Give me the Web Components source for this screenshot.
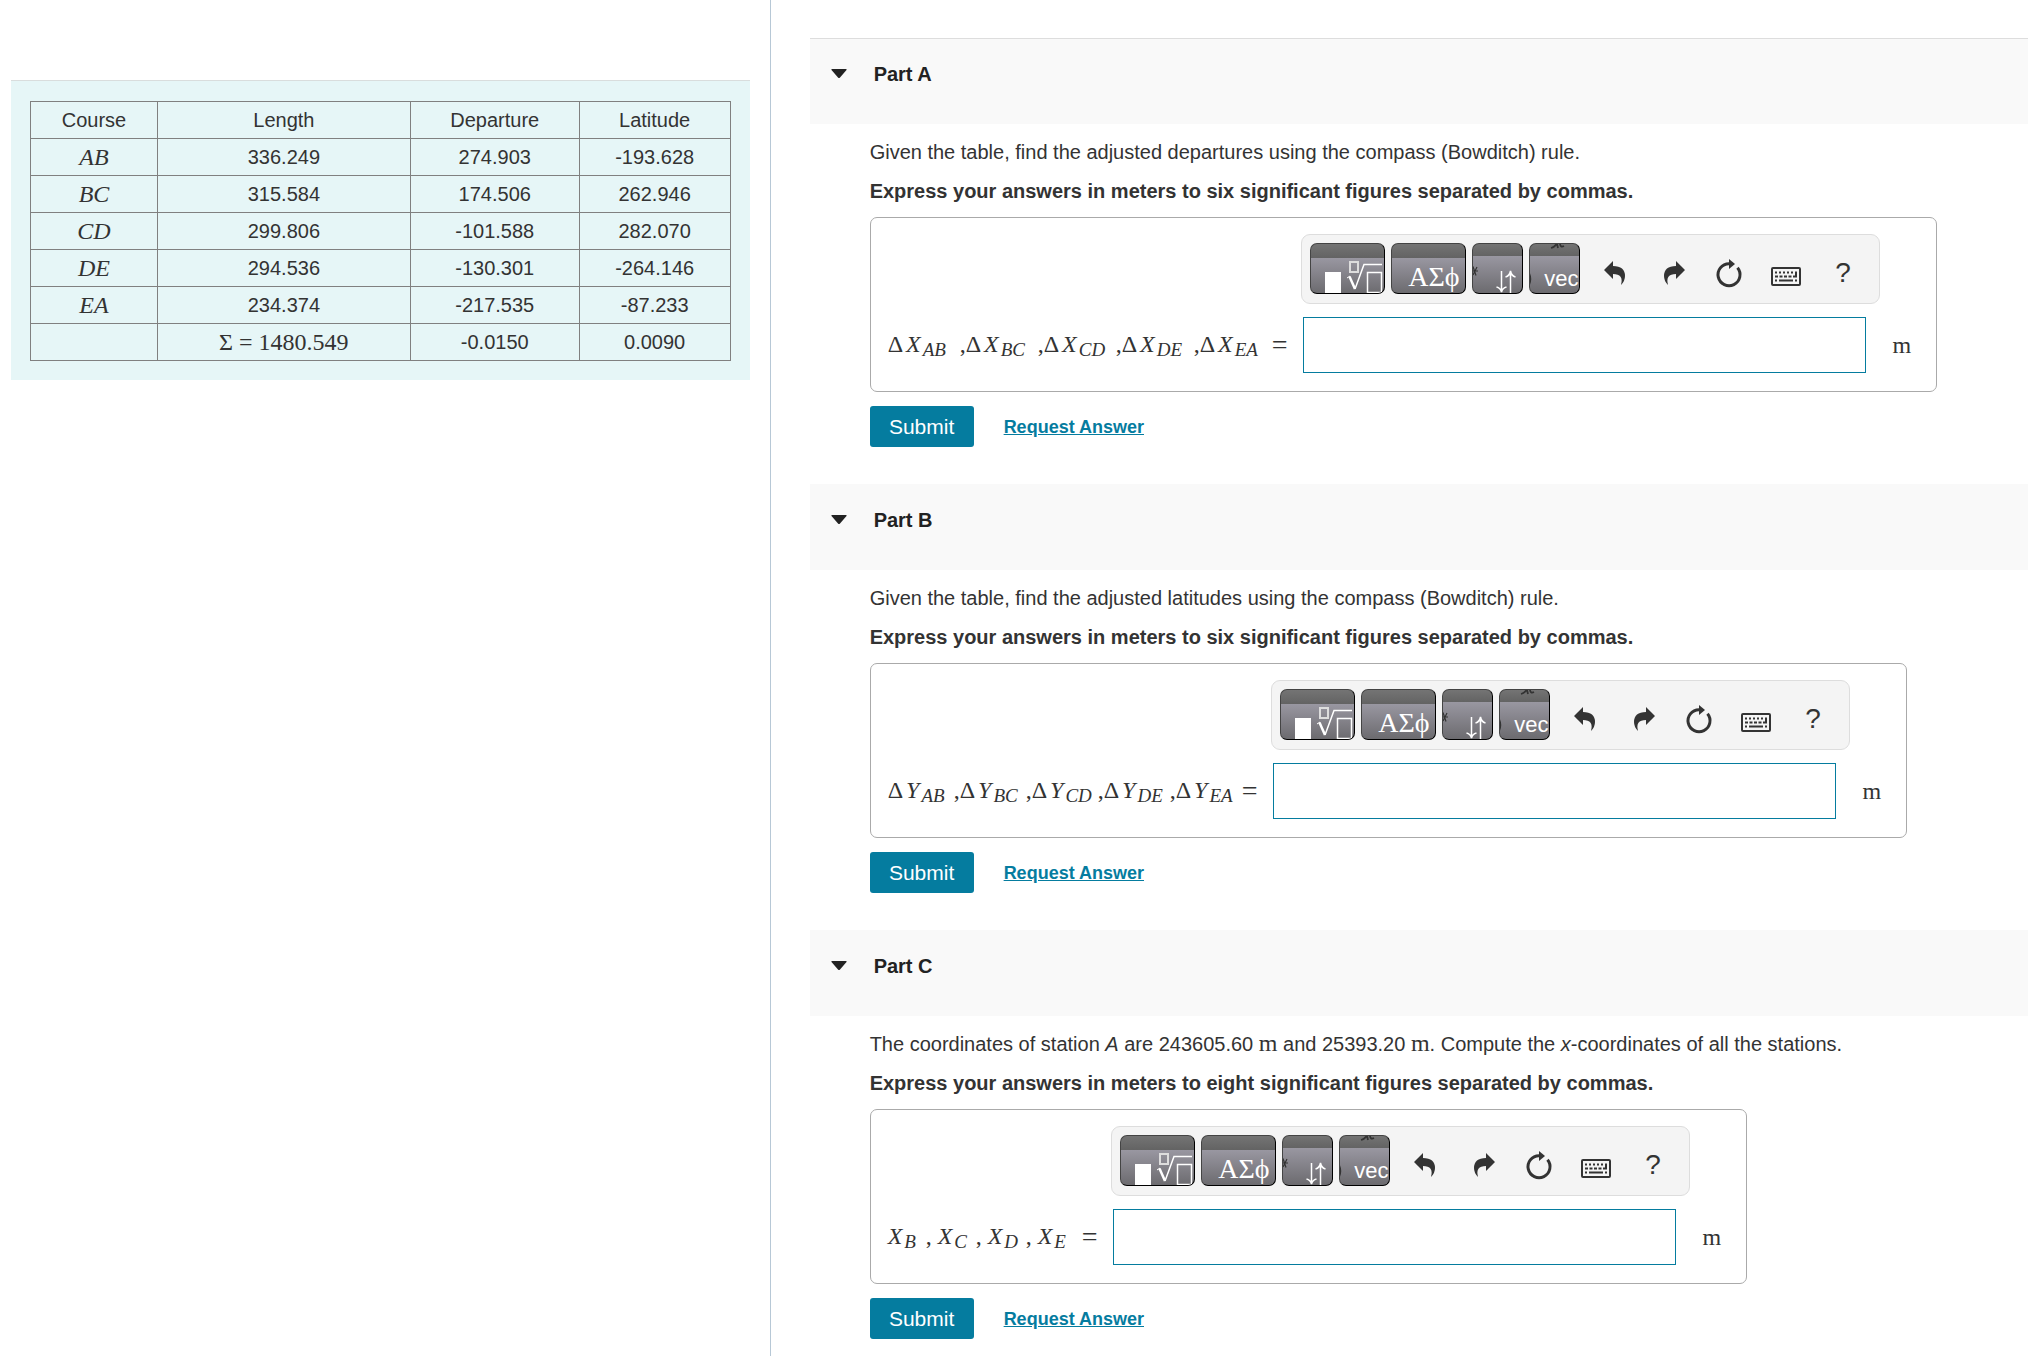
<!DOCTYPE html>
<html lang="en">
<head>
<meta charset="utf-8">
<meta name="viewport" content="width=device-width, initial-scale=1">
<title>Compass rule adjustment</title>
<style>
    body {
        margin: 0;
        background: #fff;
        color: #333;
        font: 20px/24px "Liberation Sans", Arial, sans-serif;
    }
</style>
</head>
<body>
<assignment-page>
    <course-table slot="aside"></course-table>

    <problem-part name="Part A" hint="Express your answers in meters to six significant figures separated by commas.">
        Given the table, find the adjusted departures using the compass (Bowditch) rule.
        <answer-box slot="answer" symbol="ΔX" subs="AB BC CD DE EA" style="--term: 78px"></answer-box>
    </problem-part>

    <problem-part name="Part B" hint="Express your answers in meters to six significant figures separated by commas.">
        Given the table, find the adjusted latitudes using the compass (Bowditch) rule.
        <answer-box slot="answer" symbol="ΔY" subs="AB BC CD DE EA" style="--term: 72px"></answer-box>
    </problem-part>

    <problem-part name="Part C" hint="Express your answers in meters to eight significant figures separated by commas.">
        The coordinates of station <i>A</i> are 243605.60 <unit-m></unit-m> and 25393.20 <unit-m></unit-m>. Compute the <i>x</i>-coordinates of all the stations.
        <answer-box slot="answer" symbol="X" subs="B C D E" style="--term: 50px; --comma: 6px"></answer-box>
    </problem-part>
</assignment-page>

<script>
class AssignmentPage extends HTMLElement {
    constructor() {
        super();
        this.attachShadow({ mode: 'open' });
        this.shadowRoot.innerHTML = `
            <style>
                :host {
                    display: grid;
                    grid-template-columns: 38% 1fr;
                    min-height: 100vh;
                }
                aside {
                    box-sizing: border-box;
                    padding: 80px 20px 0 11px;
                    border-right: 1px solid #b7c8d6;
                }
                main {
                    display: flex;
                    flex-direction: column;
                    gap: 37px;
                    padding: 38px 0 0 39px;
                }
            </style>
            <aside><slot name="aside"></slot></aside>
            <main><slot></slot></main>
        `;
    }
}

class CourseTable extends HTMLElement {
    constructor() {
        super();
        this.attachShadow({ mode: 'open' });
    }

    connectedCallback() {
        const rows = [
            ['AB', '336.249', '274.903', '-193.628'],
            ['BC', '315.584', '174.506', '262.946'],
            ['CD', '299.806', '-101.588', '282.070'],
            ['DE', '294.536', '-130.301', '-264.146'],
            ['EA', '234.374', '-217.535', '-87.233'],
        ];

        this.shadowRoot.innerHTML = `
            <style>
                :host {
                    display: block;
                    padding: 20px 19px 19px;
                    border-top: 1px solid #d9dddd;
                    background: #e6f6f7;
                }
                table {
                    width: 100%;
                    table-layout: fixed;
                    border-collapse: collapse;
                    text-align: center;
                }
                th, td {
                    height: 36px;
                    padding: 0;
                    border: 1px solid #808080;
                    font-weight: normal;
                }
                .math {
                    font-family: "Liberation Serif", "Times New Roman", serif;
                    font-size: 24px;
                }
                tbody th { font-style: italic; }
                .course { width: 18%; }
                .length { width: 36%; }
                .departure { width: 24%; }
            </style>
            <table>
                <thead>
                    <tr>
                        <th class="course">Course</th>
                        <th class="length">Length</th>
                        <th class="departure">Departure</th>
                        <th>Latitude</th>
                    </tr>
                </thead>
                <tbody>
                    ${rows.map(([course, ...values]) => `
                        <tr><th class="math">${course}</th>${values.map(v => `<td>${v}</td>`).join('')}</tr>
                    `).join('')}
                    <tr><td></td><td class="math">Σ = 1480.549</td><td>-0.0150</td><td>0.0090</td></tr>
                </tbody>
            </table>
        `;
    }
}

class UnitM extends HTMLElement {
    constructor() {
        super();
        this.attachShadow({ mode: 'open' });
        this.shadowRoot.innerHTML = `
            <style>
                :host {
                    display: inline;
                    font-family: "Liberation Serif", "Times New Roman", serif;
                    font-size: 24px;
                    line-height: 1px;
                }
            </style>m`;
    }
}

class ProblemPart extends HTMLElement {
    constructor() {
        super();
        this.attachShadow({ mode: 'open' });
    }

    connectedCallback() {
        this.shadowRoot.innerHTML = `
            <style>
                :host { display: block; }
                header {
                    box-sizing: border-box;
                    height: 86px;
                    padding: 23px 21px;
                    background: #f9f9f9;
                    border-top: 1px solid #f9f9f9;
                }
                :host(:first-of-type) header { border-top-color: #ddd; }
                h2 {
                    margin: 0;
                    font-size: 20px;
                    line-height: 24px;
                }
                h2 button {
                    display: flex;
                    align-items: center;
                    gap: 27px;
                    padding: 0;
                    border: 0;
                    background: none;
                    color: #222;
                    font: inherit;
                }
                .body { padding: 16px 20px 0 60px; }
                p { margin: 0 0 15px; }
                .hint {
                    margin-bottom: 14px;
                    font-weight: bold;
                }
                .actions {
                    display: flex;
                    align-items: center;
                    gap: 30px;
                    margin-top: 14px;
                }
                .submit {
                    width: 104px;
                    height: 41px;
                    padding: 0;
                    border: 0;
                    border-radius: 3px;
                    background: #057c9f;
                    color: #fff;
                    font: 21px/24px "Liberation Sans", Arial, sans-serif;
                }
                a {
                    color: #057c9f;
                    font-size: 18px;
                    font-weight: bold;
                }
            </style>
            <header>
                <h2>
                    <button type="button" aria-expanded="true">
                        <svg width="16" height="10" viewBox="0 0 16 10" aria-hidden="true"><path d="M1 0h14q1 0 .5 1L9 8.500q-1 1-2 0L.5 1Q0 0 1 0z" fill="#222"/></svg>
                        ${this.getAttribute('name')}
                    </button>
                </h2>
            </header>
            <div class="body">
                <p><slot></slot></p>
                <p class="hint">${this.getAttribute('hint')}</p>
                <slot name="answer"></slot>
                <div class="actions">
                    <button class="submit" type="button">Submit</button>
                    <a href="#">Request Answer</a>
                </div>
            </div>
        `;
    }
}

class AnswerBox extends HTMLElement {
    constructor() {
        super();
        this.attachShadow({ mode: 'open' });
    }

    connectedCallback() {
        const [letter, delta] = [...this.getAttribute('symbol')].reverse();
        const subs = this.getAttribute('subs').split(' ');
        const terms = subs.map((sub, i) => `
            <span class="term">${delta ? `<span class="delta">${delta}</span>` : ''}<i>${letter}</i><sub>${sub}</sub>${i < subs.length - 1 ? '<span class="comma">,</span>' : ''}</span>
        `).join('');

        this.shadowRoot.innerHTML = `
            <style>
                :host {
                    display: grid;
                    grid-template-columns: auto 579px auto;
                    align-items: center;
                    row-gap: 13px;
                    box-sizing: border-box;
                    width: max-content;
                    padding: 16px 25px 18px 17px;
                    border: 1px solid #aaa;
                    border-radius: 7px;
                }
                math-toolbar { grid-column: 2; }
                label {
                    grid-column: 1;
                    display: flex;
                    align-items: center;
                    padding-right: 14px;
                }
                label, .unit {
                    font-family: "Liberation Serif", "Times New Roman", serif;
                    font-size: 24px;
                }
                .term {
                    display: flex;
                    align-items: baseline;
                    box-sizing: border-box;
                    width: var(--term);
                }
                .term:nth-last-child(2) { width: calc(var(--term) - 6px); }
                .delta { margin-right: 3px; }
                sub {
                    margin-left: 2px;
                    font-size: 19px;
                    font-style: italic;
                    line-height: 24px;
                    position: relative;
                    top: 4px;
                    vertical-align: baseline;
                }
                .comma {
                    margin-left: auto;
                    margin-right: var(--comma, 0);
                }
                .equals { font-size: 28px; }
                input {
                    box-sizing: border-box;
                    height: 56px;
                    margin: 0 14px 0 2px;
                    padding: 0 12px;
                    border: 1px solid #057c9f;
                    border-radius: 0;
                    background: #fff;
                    font: inherit;
                }
                .unit { padding-left: 12px; }
            </style>
            <math-toolbar></math-toolbar>
            <label for="answer">${terms}<span class="equals">=</span></label>
            <input id="answer" type="text">
            <span class="unit">m</span>
        `;
    }
}

class MathToolbar extends HTMLElement {
    constructor() {
        super();
        this.attachShadow({ mode: 'open' });
        this.shadowRoot.innerHTML = `
            <style>
                :host {
                    display: flex;
                    box-sizing: border-box;
                    height: 70px;
                    padding: 8px;
                    border: 1px solid #ddd;
                    border-radius: 9px;
                    background: #f4f4f4;
                }
                button {
                    box-sizing: border-box;
                    height: 51px;
                    padding: 0;
                    border: 0;
                    background: none;
                    color: #333;
                    font: inherit;
                }
                .key {
                    display: flex;
                    flex: none;
                    justify-content: flex-end;
                    align-items: flex-end;
                    width: 51px;
                    margin-right: 6px;
                    overflow: hidden;
                    border: 1px solid #000;
                    border-top-color: #444;
                    border-left-color: #444;
                    border-radius: 7px;
                    background: linear-gradient(#747474, #636363 12px, #9997a1 12px, #6c6b6f);
                    color: #fff;
                }
                .wide {
                    width: 75px;
                    background: linear-gradient(#747474, #636363 14px, #9997a1 14px, #6c6b6f);
                }
                .greek {
                    padding: 0 6px 2px 0;
                    font: 28px/28px "Liberation Serif", "Times New Roman", serif;
                }
                .vec {
                    display: grid;
                    justify-content: stretch;
                    align-items: end;
                    font-size: 22px;
                    line-height: 24px;
                }
                .vec > * { grid-area: 1 / 1; }
                .vec span { padding: 0 1px 2px 0; text-align: right; }
                .icon {
                    display: flex;
                    justify-content: center;
                    align-items: center;
                    width: 57px;
                    padding-top: 10px;
                }
                svg { display: block; flex: none; }
                .help { font-size: 28px; line-height: 28px; padding-top: 8px; }
            </style>
            <button class="key wide" type="button" aria-label="Templates">
                <svg width="73" height="49" viewBox="1 1 73 49" fill="none" stroke="#fff">
                    <path d="M15 29h16v21H15z" fill="#fff" stroke="none"/>
                    <path d="M40 19h8v10h-8z" stroke="#ddd" stroke-width="2"/>
                    <path d="M37 35l3-2" stroke-width="1"/>
                    <path d="M39.500 33.500L45 46" stroke-width="2.500"/>
                    <path d="M45 46l9-24.500h18" stroke-width="1.500"/>
                    <path d="M57.500 29.500h14v20h-14z" stroke-width="1.500"/>
                </svg>
            </button>
            <button class="key wide greek" type="button">ΑΣϕ</button>
            <button class="key" type="button" aria-label="Arrows">
                <svg width="49" height="49" viewBox="1 1 49 49" fill="none" stroke="#fff" stroke-width="1.500">
                    <path d="M-1 28h7M1 23.500l3 9M5 24l-4 8" stroke="#333" stroke-width="1.200"/>
                    <path d="M29.500 28v21M24.500 44q4 1 5 5q1-4 5-5M38.500 50V28M33.500 34q4-1 5-6q1 5 5 6"/>
                </svg>
            </button>
            <button class="key vec" type="button">
                <svg width="49" height="49" viewBox="1 1 49 49" fill="none" stroke="#333">
                    <path d="M22 5q4-1 6-5M28 1l1 4M31 0q0 5 4 3" stroke-width="1.800"/>
                    <path d="M0 30q3 6 0 12" stroke-width="1.500"/>
                </svg>
                <span>vec</span>
            </button>
            <button class="icon" type="button" aria-label="Undo">
                <svg width="30" height="30" viewBox="0 0 30 30"><path d="M4 11l9-9v5q12 0 12 10q0 5-4 9q3-11-8-11v5z" fill="#333"/></svg>
            </button>
            <button class="icon" type="button" aria-label="Redo">
                <svg width="30" height="30" viewBox="0 0 30 30"><path d="M28 11l-9-9v5q-12 0-12 10q0 5 4 9q-3-11 8-11v5z" fill="#333"/></svg>
            </button>
            <button class="icon" type="button" aria-label="Reset">
                <svg width="30" height="30" viewBox="0 0 30 30"><path d="M23.500 8.700A11 11 0 1 1 15 4.700" fill="none" stroke="#333" stroke-width="3"/><path d="M15 0l6 5-6 5z" fill="#333"/></svg>
            </button>
            <button class="icon" type="button" aria-label="Keyboard shortcuts">
                <svg width="30" height="30" viewBox="0 0 30 30" fill="none" stroke="#333">
                    <rect x="1" y="9" width="28" height="17" rx="1" stroke-width="2"/>
                    <path d="M4 13.500h18" stroke-width="2" stroke-dasharray="2 2"/>
                    <path d="M4 17.500h18" stroke-width="2" stroke-dasharray="3 1.500"/>
                    <path d="M4 21.500h2M8 21.500h14M24 21.500h2M22 17.500h3v-5" stroke-width="2"/>
                </svg>
            </button>
            <button class="icon help" type="button" aria-label="Help">?</button>
        `;
    }
}

customElements.define('unit-m', UnitM);
customElements.define('math-toolbar', MathToolbar);
customElements.define('answer-box', AnswerBox);
customElements.define('problem-part', ProblemPart);
customElements.define('course-table', CourseTable);
customElements.define('assignment-page', AssignmentPage);
</script>
</body>
</html>
